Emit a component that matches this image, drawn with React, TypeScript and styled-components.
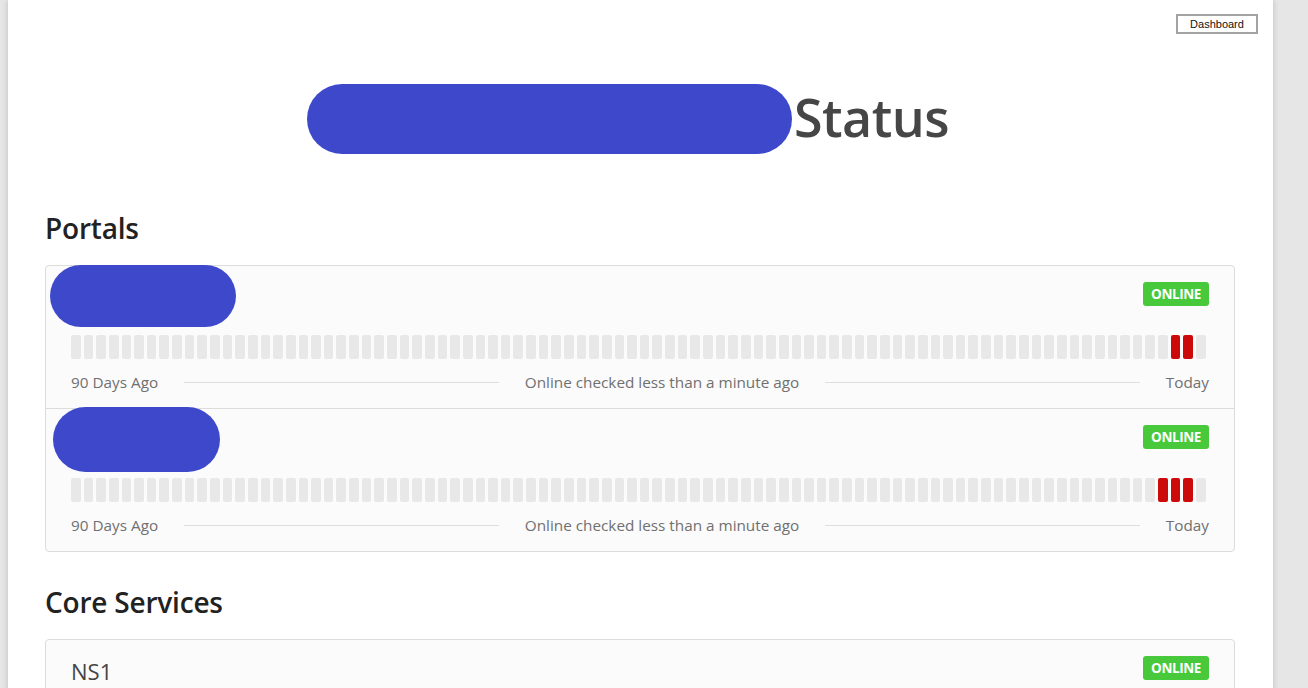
import React from "react";
import styled, { createGlobalStyle } from "styled-components";

const GlobalStyle = createGlobalStyle`
  html, body {
    margin: 0;
    padding: 0;
    background: #e6e6e6;
    font-family: "Open Sans", "Noto Sans", sans-serif;
  }
  * { box-sizing: border-box; }
`;

const Page = styled.div`
  width: 1265px;
  min-height: 688px;
  margin-left: 8px;
  background: #fff;
  box-shadow: 0 0 6px rgba(0, 0, 0, 0.18);
  padding: 0 38px 40px 37px;
`;

const TopBar = styled.div`
  display: flex;
  justify-content: flex-end;
  padding-top: 14px;
  margin-right: -23px;
`;

const DashButton = styled.button`
  height: 20px;
  width: 82px;
  padding: 0;
  border: 2px solid #a3a3a3;
  background: #fff;
  font-family: "Liberation Sans", Arial, sans-serif;
  font-size: 11px;
  color: #111;
`;

const Title = styled.h1`
  display: flex;
  justify-content: center;
  align-items: center;
  gap: 2px;
  margin: 49px 0 0;
  padding-right: 24px;
  height: 72px;
  font-size: 52px;
  font-weight: 600;
  letter-spacing: -0.5px;
  color: #464646;
  span + & {
    margin: 0;
  }
`;

const StatusWord = styled.span`
  position: relative;
  top: -3px;
`;

const Scribble = styled.span<{ w: number; h: number }>`
  display: inline-block;
  width: ${(p) => p.w}px;
  height: ${(p) => p.h}px;
  border-radius: ${(p) => p.h / 2}px;
  background: #3e48cb;
`;

const SectionTitle = styled.h2<{ first?: boolean }>`
  margin: ${(p) => (p.first ? "53px" : "30px")} 0 17px;
  font-size: 28px;
  line-height: 40px;
  font-weight: 600;
  letter-spacing: -0.2px;
  color: #222;
`;

const Card = styled.div`
  border: 1px solid #dcdcdc;
  border-radius: 4px;
  background: #fbfbfb;
`;

const Row = styled.div`
  position: relative;
  padding: 16px 25px 15px;
  & + & {
    border-top: 1px solid #dcdcdc;
  }
`;

const RowHead = styled.div`
  display: flex;
  justify-content: space-between;
  align-items: flex-start;
  height: 33px;
`;

const Name = styled.span`
  font-size: 22px;
  line-height: 30px;
  color: #444;
`;

const NameMask = styled(Scribble)<{ left: number; top: number }>`
  position: absolute;
  left: ${(p) => p.left}px;
  top: ${(p) => p.top}px;
`;

const Badge = styled.span`
  display: inline-block;
  background: #47c93b;
  color: #fff;
  font-size: 13.5px;
  font-weight: 700;
  line-height: 24px;
  height: 24px;
  padding: 0 8px;
  border-radius: 3px;
  letter-spacing: -0.4px;
`;

const Bars = styled.div`
  display: flex;
  gap: 3px;
  height: 24px;
  margin: 20px 4px 0 0;
`;

const Bar = styled.span<{ down?: boolean }>`
  flex: 1;
  border-radius: 2px;
  background: ${(p) => (p.down ? "#cc0a0a" : "#e8e8e8")};
`;

const Footer = styled.div`
  display: flex;
  align-items: center;
  gap: 26px;
  margin-top: 12px;
  font-size: 15.3px;
  line-height: 22px;
  color: #707070;
`;

const Rule = styled.span`
  flex: 1;
  height: 1px;
  background: #dedede;
`;

type Monitor = {
  name: string;
  down: number[];
  mask?: { w: number; h: number; left: number; top: number };
};

const portals: Monitor[] = [
  { name: "Portal", down: [87, 88], mask: { w: 186, h: 62, left: 4, top: -1 } },
  { name: "Portal", down: [86, 87, 88], mask: { w: 167, h: 65, left: 7, top: -2 } },
];

const core: Monitor[] = [{ name: "NS1", down: [] }];

function MonitorRow({ m }: { m: Monitor }) {
  return (
    <Row>
      <RowHead>
        <Name>{m.mask ? "" : m.name}</Name>
        <Badge>ONLINE</Badge>
      </RowHead>
      {m.mask && (
        <NameMask w={m.mask.w} h={m.mask.h} left={m.mask.left} top={m.mask.top} />
      )}
      <Bars>
        {Array.from({ length: 90 }, (_, i) => (
          <Bar key={i} down={m.down.includes(i)} />
        ))}
      </Bars>
      <Footer>
        <span>90 Days Ago</span>
        <Rule />
        <span>Online checked less than a minute ago</span>
        <Rule />
        <span>Today</span>
      </Footer>
    </Row>
  );
}

export default function App() {
  return (
    <>
      <GlobalStyle />
      <Page>
        <TopBar>
          <DashButton>Dashboard</DashButton>
        </TopBar>
        <Title>
          <Scribble w={485} h={70} />
          <StatusWord>Status</StatusWord>
        </Title>
        <SectionTitle first>Portals</SectionTitle>
        <Card>
          {portals.map((m, i) => (
            <MonitorRow key={i} m={m} />
          ))}
        </Card>
        <SectionTitle>Core Services</SectionTitle>
        <Card>
          {core.map((m, i) => (
            <MonitorRow key={i} m={m} />
          ))}
        </Card>
      </Page>
    </>
  );
}
